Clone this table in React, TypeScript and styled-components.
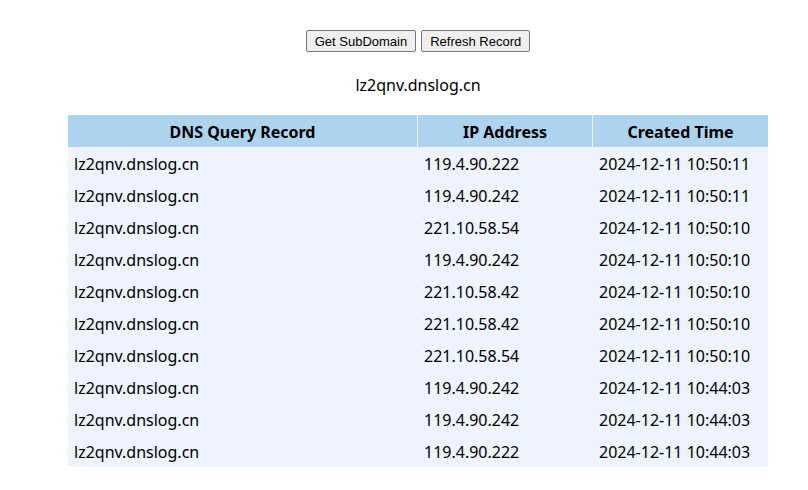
import React from "react";
import styled, { createGlobalStyle } from "styled-components";

const Global = createGlobalStyle`
  html, body { margin: 0; padding: 0; background: #ffffff; }
  body { font-family: "Noto Sans", "Open Sans", sans-serif; color: #000; }
`;

const Page = styled.div`
  width: 700px;
  margin-left: 68px;
  padding-top: 30px;
  display: flex;
  flex-direction: column;
  align-items: center;
`;

const Toolbar = styled.div`
  display: flex;
  gap: 5px;
  height: 22px;
`;

const Button = styled.button`
  font-family: "Liberation Sans", Arial, sans-serif;
  font-size: 13px;
  height: 22px;
  padding: 0 8px;
  background: #efefef;
  border: 1px solid #767676;
  border-radius: 2px;
  color: #000;
  cursor: pointer;
`;

const Domain = styled.div`
  margin-top: 21px;
  font-size: 16px;
  line-height: 24px;
  height: 24px;
`;

const Table = styled.div`
  margin-top: 18px;
  width: 700px;
  display: grid;
  grid-template-columns: 349px 174px 175px;
  column-gap: 1px;
  background: #eef3fd;
`;

const HeadCell = styled.div`
  box-sizing: border-box;
  background: #aed3ef;
  font-weight: 700;
  font-size: 16px;
  height: 32px;
  padding-top: 2px;
  line-height: 30px;
  text-align: center;
`;

const Cell = styled.div`
  box-sizing: border-box;
  font-size: 16px;
  height: 32px;
  padding-top: 3px;
  line-height: 29px;
  padding-left: 6px;
  white-space: nowrap;
`;

const records = [
  ["lz2qnv.dnslog.cn", "119.4.90.222", "2024-12-11 10:50:11"],
  ["lz2qnv.dnslog.cn", "119.4.90.242", "2024-12-11 10:50:11"],
  ["lz2qnv.dnslog.cn", "221.10.58.54", "2024-12-11 10:50:10"],
  ["lz2qnv.dnslog.cn", "119.4.90.242", "2024-12-11 10:50:10"],
  ["lz2qnv.dnslog.cn", "221.10.58.42", "2024-12-11 10:50:10"],
  ["lz2qnv.dnslog.cn", "221.10.58.42", "2024-12-11 10:50:10"],
  ["lz2qnv.dnslog.cn", "221.10.58.54", "2024-12-11 10:50:10"],
  ["lz2qnv.dnslog.cn", "119.4.90.242", "2024-12-11 10:44:03"],
  ["lz2qnv.dnslog.cn", "119.4.90.242", "2024-12-11 10:44:03"],
  ["lz2qnv.dnslog.cn", "119.4.90.222", "2024-12-11 10:44:03"],
];

export default function App() {
  return (
    <>
      <Global />
      <Page>
        <Toolbar>
          <Button>Get SubDomain</Button>
          <Button>Refresh Record</Button>
        </Toolbar>
        <Domain>lz2qnv.dnslog.cn</Domain>
        <Table>
          <HeadCell>DNS Query Record</HeadCell>
          <HeadCell>IP Address</HeadCell>
          <HeadCell>Created Time</HeadCell>
          {records.map((r, i) => (
            <React.Fragment key={i}>
              <Cell>{r[0]}</Cell>
              <Cell>{r[1]}</Cell>
              <Cell>{r[2]}</Cell>
            </React.Fragment>
          ))}
        </Table>
      </Page>
    </>
  );
}
